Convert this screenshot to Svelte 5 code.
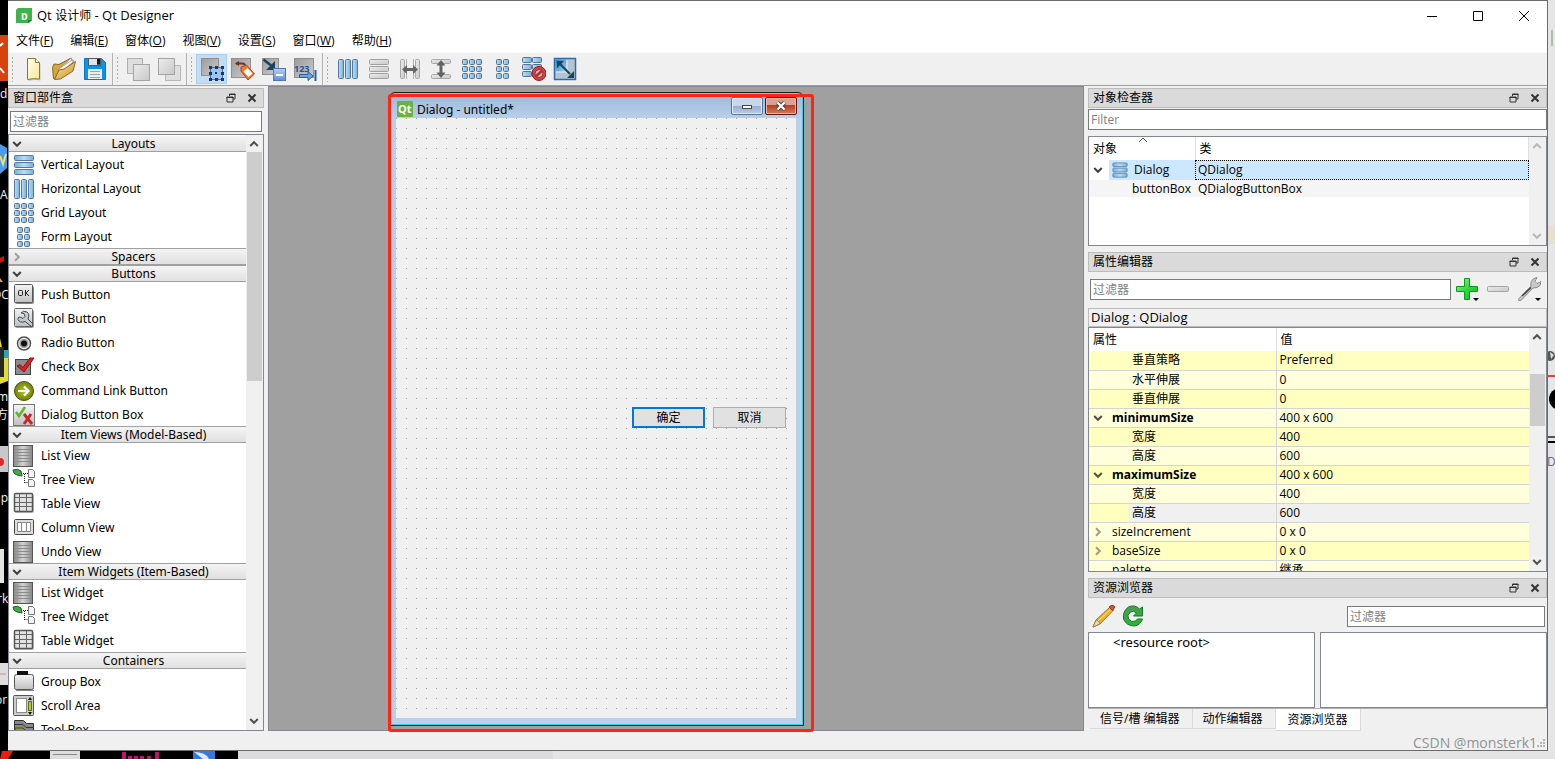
<script>
  const menus = [
    ['文件', 'F'], ['编辑', 'E'], ['窗体', 'O'], ['视图', 'V'],
    ['设置', 'S'], ['窗口', 'W'], ['帮助', 'H']
  ];

  const toolGroups = [
    [['new', '新建'], ['open', '打开'], ['save', '保存']],
    [['back', '置后'], ['front', '置前']],
    [['widgets', '编辑控件'], ['signals', '编辑信号/槽'], ['buddies', '编辑伙伴'], ['taborder', '编辑 Tab 顺序']],
    [['hbox', '水平布局'], ['vboxoff', '垂直布局'], ['hsplit', '水平分裂器'], ['vsplit', '垂直分裂器'],
     ['grid', '栅格布局'], ['form', '表单布局'], ['break', '打破布局'], ['adjust', '调整大小']]
  ];

  let activeTool = $state('widgets');

  let categories = $state([
    { name: 'Layouts', open: true, items: [['vbox', 'Vertical Layout'], ['hbox', 'Horizontal Layout'], ['grid', 'Grid Layout'], ['form', 'Form Layout']] },
    { name: 'Spacers', open: false, items: [] },
    { name: 'Buttons', open: true, items: [['push', 'Push Button'], ['tool', 'Tool Button'], ['radio', 'Radio Button'], ['check', 'Check Box'], ['command', 'Command Link Button'], ['bbox', 'Dialog Button Box']] },
    { name: 'Item Views (Model-Based)', open: true, items: [['list', 'List View'], ['tree', 'Tree View'], ['table', 'Table View'], ['column', 'Column View'], ['list', 'Undo View']] },
    { name: 'Item Widgets (Item-Based)', open: true, items: [['list', 'List Widget'], ['tree', 'Tree Widget'], ['table', 'Table Widget']] },
    { name: 'Containers', open: true, items: [['group', 'Group Box'], ['scroll', 'Scroll Area'], ['toolbox', 'Tool Box']] }
  ]);

  const properties = [
    { name: '垂直策略', value: 'Preferred', kind: 'child' },
    { name: '水平伸展', value: '0', kind: 'child' },
    { name: '垂直伸展', value: '0', kind: 'child' },
    { name: 'minimumSize', value: '400 x 600', kind: 'open' },
    { name: '宽度', value: '400', kind: 'child' },
    { name: '高度', value: '600', kind: 'child' },
    { name: 'maximumSize', value: '400 x 600', kind: 'open' },
    { name: '宽度', value: '400', kind: 'child' },
    { name: '高度', value: '600', kind: 'child', current: true },
    { name: 'sizeIncrement', value: '0 x 0', kind: 'closed' },
    { name: 'baseSize', value: '0 x 0', kind: 'closed' },
    { name: 'palette', value: '继承', kind: 'plain' }
  ];

  const tabs = ['信号/槽 编辑器', '动作编辑器', '资源浏览器'];
  let activeTab = $state(2);
</script>

{#snippet chevron(dir, tone)}
  <svg class="chev" viewBox="0 0 10 10" style:color={tone}>
    {#if dir === 'down'}
      <path d="M1.2 3 5 6.8 8.800 3" />
    {:else if dir === 'up'}
      <path d="M1.2 7 5 3.2 8.800 7" />
    {:else}
      <path d="M3 1.2 6.800 5 3 8.800" />
    {/if}
  </svg>
{/snippet}

{#snippet cells(xs, ys, w, h, fill, stroke)}
  {#each ys as y}
    {#each xs as x}
      <rect {x} {y} width={w} height={h} rx="1" fill="url(#{fill})" {stroke} />
    {/each}
  {/each}
{/snippet}

{#snippet sheet(x, y, s)}
  <rect {x} {y} width={s} height={s} fill="url(#g-grey)" stroke="#909090" />
{/snippet}

{#snippet icon(name)}
  <svg class="icon" viewBox="0 0 24 24" aria-hidden="true">
    {#if name === 'new'}
      <path d="M7 2.500h8l3.500 4v16q-6-1-12 .5z" fill="#999" opacity=".5" transform="translate(1 1)" />
      <path d="M6.500 1.500h8l4 4v16.500q-6-1-12 .5z" fill="url(#g-page)" stroke="#8a7a30" />
      <path d="M14.500 1.500v4h4" fill="#fff" stroke="#8a7a30" />
    {:else if name === 'open'}
      <path d="M.5 10.500 2 7l5 .5L19 1l1 3.500L7 21.500H1.500z" fill="#d7a63a" stroke="#8a6a1e" />
      <path d="M6 13 18.500 1.500 22 4 8 17z" fill="#f6f6f0" stroke="#999" />
      <path d="M8 11 20 3l2 3" fill="none" stroke="#aaa" />
      <path d="M2.500 22.500 7 13l5-1L23.500 4.500 21 14 8.500 22z" fill="url(#g-folder)" stroke="#8a6a1e" />
    {:else if name === 'save'}
      <path d="M1.500 1.500h17l4 4v17h-21z" fill="#0a94ee" stroke="#0878c8" />
      <rect x="5" y="1" width="13" height="8" fill="#54585c" />
      <rect x="6" y="2" width="8" height="6" fill="#dfe5e9" />
      <rect x="14" y="2" width="3" height="5" fill="#16181a" />
      <rect x="5" y="12" width="14" height="10" fill="#e9eff3" />
      <path d="M7 14.500h10M7 17.500h10M7 20.500h10" stroke="#9aa4aa" />
    {:else if name === 'back'}
      <rect x="1.500" y="1.500" width="15" height="15" fill="#dedede" stroke="#b0b0b0" />
      <rect x="7.500" y="7.500" width="16" height="16" fill="url(#g-off)" stroke="#a4a4a4" />
    {:else if name === 'front'}
      <rect x="8.500" y="8.500" width="15" height="15" fill="#dedede" stroke="#b8b8b8" />
      <rect x="1.500" y="1.500" width="16" height="16" fill="url(#g-off)" stroke="#a4a4a4" />
    {:else if name === 'widgets'}
      {@render sheet(1.5, 1.5, 17)}
      <rect x="10.500" y="10.500" width="12" height="12" fill="#9cc4f0" stroke="#4a6ea0" />
      <path d="M9 9h3v3H9zM15 9h3v3h-3zM21 9h3v3h-3zM9 15h3v3H9zM21 15h3v3h-3zM15 15h2v2h-2zM9 21h3v3H9zM15 21h3v3h-3zM21 21h3v3h-3z" fill="#20365c" />
    {:else if name === 'signals'}
      {@render sheet(0.5, 1.5, 19)}
      <path d="M5 6.500h6q4 0 3 4" fill="none" stroke="#7c3018" stroke-width="2" />
      <path d="M4 6.500 8 4v5z" fill="#7c3018" />
      <path d="M10 10 15.500 8l8 9-6.500 6-7-9z" fill="#f07830" stroke="#b04418" />
      <path d="m12.500 14.500 4-3.500 5 5.500-4 3.500z" fill="#fff" />
    {:else if name === 'buddies'}
      {@render sheet(0.5, 1.5, 16)}
      <path d="M1.500 2.500 11 10" stroke="#1c4460" stroke-width="2.500" />
      <path d="M13 4v9H4z" fill="#1c4460" />
      <rect x="11.500" y="11.500" width="12" height="12" fill="url(#g-blue2)" stroke="#5874b0" />
      <path d="M14 18h7" stroke="#fff" stroke-width="2" />
    {:else if name === 'taborder'}
      {@render sheet(1.5, 1.5, 19)}
      <text x="1" y="15" class="digits">123</text>
      <path d="M6.500 17.500H15v-3l5 4.500-5 4.500v-3H6.500z" fill="#6ea4e0" stroke="#2c5ca0" />
      <path d="M22.500 13v11" stroke="#2c5ca0" stroke-width="2" />
    {:else if name === 'hbox'}
      {@render cells([2.5, 9.5, 16.5], [2.5], 5, 19, 'g-blue', '#56789c')}
    {:else if name === 'vbox'}
      {@render cells([2.5], [2.5, 9.5, 16.5], 19, 5, 'g-blueh', '#56789c')}
    {:else if name === 'vboxoff'}
      {@render cells([2.5], [2.5, 9.5, 16.5], 19, 5, 'g-off', '#a0a0a0')}
    {:else if name === 'hsplit'}
      {@render cells([2.5, 17.5], [2.5], 4, 19, 'g-off', '#a8a8a8')}
      <path d="M8.500 2v20M15.500 2v20" stroke="#b0b0b0" />
      <path d="M4 12.500 9 8v3h6V8l5 4.500-5 4.500v-3H9v3z" fill="#646464" />
    {:else if name === 'vsplit'}
      {@render cells([2.5], [2.5, 17.5], 19, 4, 'g-off', '#a8a8a8')}
      <path d="M12 3 7.500 8.500h3v7h-3L12 21l4.500-5.500h-3v-7h3z" fill="#646464" />
    {:else if name === 'grid'}
      {@render cells([2.5, 9.5, 16.5], [2.5, 9.5, 16.5], 5, 5, 'g-blue', '#56708e')}
    {:else if name === 'form'}
      {@render cells([5.5, 12.5], [2.5, 9.5, 16.5], 5, 5, 'g-blue', '#56708e')}
    {:else if name === 'break'}
      {@render cells([0.5, 10.5], [0.5, 7.5, 14.5], 9, 5, 'g-blue', '#56708e')}
      <circle cx="17" cy="16.500" r="7" fill="#d84040" stroke="#8c2020" />
      <circle cx="17" cy="16.500" r="4" fill="#b8bcc4" stroke="#a02828" />
      <path d="m13.500 19.500 7-6" stroke="#c02c2c" stroke-width="2.500" />
    {:else if name === 'adjust'}
      <rect x="1.500" y="1.500" width="21" height="21" fill="#b4c4d2" stroke="#2f6ca6" stroke-width="1.500" />
      <path d="M2.500 2.500h11v12h-11z" fill="url(#g-sky)" />
      <path d="M14 3v12H3" fill="none" stroke="#e8f0f6" />
      <path d="m7 7 10 10" stroke="#12465e" stroke-width="2" />
      <path d="M4 4h7l-7 7zM21 21v-7l-7 7z" fill="#12465e" />
    {:else if name === 'push'}
      <rect x="3" y="3" width="19" height="18" rx="2" fill="#555" opacity=".7" />
      <rect x="2.500" y="1.500" width="18" height="18" rx="1" fill="url(#g-btn)" stroke="#555" />
      <rect x="6.500" y="7.500" width="4" height="5" rx="1" fill="none" stroke="#222" />
      <path d="M13.500 7v6M17 7l-3 3 3 3" fill="none" stroke="#222" />
    {:else if name === 'tool'}
      <rect x="3" y="3" width="19" height="18" rx="2" fill="#777" opacity=".7" />
      <rect x="2.500" y="1.500" width="18" height="18" rx="1" fill="url(#g-btn)" stroke="#666" />
      <path d="M6 12.500q2 4 7 2l7 5.500 1-3-5-5q2-5-1-7-4-2-6 1l3 .5 1 3-2 2-3-1.500q-2.500 0-2 2.500z" fill="#c4c8cc" stroke="#444a50" />
    {:else if name === 'radio'}
      <circle cx="12" cy="12.500" r="6.500" fill="#eee" stroke="#555" stroke-width="1.500" />
      <circle cx="12" cy="12.500" r="4.500" fill="#999" />
      <circle cx="12" cy="12.500" r="3" fill="#111" />
    {:else if name === 'check'}
      <rect x="3.500" y="4.500" width="15" height="15" fill="#8d8d8d" stroke="#444" />
      <path d="m5 11 3-1.500 3 3L18 3h4L12 17z" fill="#e02020" stroke="#8c1010" />
    {:else if name === 'command'}
      <circle cx="12" cy="12" r="9.500" fill="url(#g-olive)" stroke="#4a5808" />
      <path d="M6 12h10M12 7.500 16.500 12 12 16.500" fill="none" stroke="#fff" stroke-width="2.200" />
    {:else if name === 'bbox'}
      <rect x="1.500" y="1.500" width="21" height="21" fill="url(#g-btn)" stroke="#777" />
      <path d="m4 9 3 4 6-9" fill="none" stroke="#5cb82c" stroke-width="2.500" />
      <path d="m12 11 8 10M19 11l-7 10" stroke="#c82828" stroke-width="3" />
    {:else if name === 'list'}
      <rect x="1.500" y="1.500" width="19" height="21" fill="url(#g-list)" stroke="#555" />
      <path d="M3 5.500h16M3 8.500h16M3 11.500h16M3 14.500h16M3 17.500h16" stroke="#8a8a8a" />
      <path d="M5.500 3v18" stroke="#999" />
    {:else if name === 'tree'}
      <path d="M1 2q5-2 8 1l1 5-5-1Q1 6 1 2z" fill="#46a846" stroke="#1c6420" />
      <path d="M11 5.500h5M12.500 6v9M12.500 14.500h4" stroke="#222" stroke-dasharray="1 1" fill="none" />
      <path d="M16.500 1.500h4l2 2v6h-6zM16.500 11.500h4l2 2v5h-6z" fill="#f4f4f4" stroke="#777" />
    {:else if name === 'table'}
      <rect x="3" y="3" width="19" height="18" rx="1" fill="#999" opacity=".6" />
      <rect x="2.500" y="1.500" width="18" height="18" rx="1" fill="#e2e2e2" stroke="#555" stroke-width="1.500" />
      <path d="M3 5.500h17M3 10.500h17M3 14.500h17M7.500 2v17M14.500 2v17" stroke="#666" />
    {:else if name === 'column'}
      <rect x="2.500" y="3.500" width="19" height="15" rx="1" fill="#ddd" stroke="#444" />
      <path d="M5.500 6.500h4v9h-4zM9.500 6.500h5v9h-5zM14.500 6.500h4v9h-4z" fill="#fafafa" stroke="#888" />
    {:else if name === 'group'}
      <rect x="2.500" y="4.500" width="19" height="15" rx="2" fill="url(#g-btn)" stroke="#555" />
      <rect x="5" y="1" width="11" height="4" fill="#111" />
      <path d="M4 20.500h18" stroke="#888" />
    {:else if name === 'scroll'}
      <rect x="1.500" y="1.500" width="20" height="20" rx="1" fill="#ccc" stroke="#555" />
      <rect x="4.500" y="4.500" width="10" height="14" fill="#fff" stroke="#888" />
      <rect x="16.500" y="7.500" width="3" height="9" fill="#b4cc28" stroke="#607010" />
      <path d="m16 6 2-3 2 3zM16 18l2 3 2-3z" fill="#111" />
    {:else if name === 'toolbox'}
      <path d="M2.500 22V2.500h9l3 3h7V22z" fill="#888" stroke="#333" />
      <path d="M3 6.500h8l3 3h8" fill="none" stroke="#333" />
      <path d="M3 10h8l3 3h8v10H3z" fill="#8ca020" stroke="#445010" />
    {:else if name === 'plus'}
      <path d="M9.500 1.500h5v8h8v5h-8v8h-5v-8h-8v-5h8z" fill="url(#g-green)" stroke="#0a9a18" />
    {:else if name === 'minus'}
      <rect x="1.500" y="9.500" width="21" height="5" rx="1" fill="url(#g-off)" stroke="#a4a4a4" />
    {:else if name === 'wrench'}
      <path d="M1.500 22 14 9q-1-5 3-7.500l3-1-2 4 2 2 4-2q0 5-4 6l-4 .5L4 23.500q-3 1-2.500-1.500z" fill="#c8c8c8" stroke="#8c8c8c" />
      <path d="m5 19 9-8.500" stroke="#444" stroke-width="1.500" />
    {:else if name === 'pencil'}
      <path d="M1 23 4 16 18 3l3.500 3L8 20z" fill="#f0b030" stroke="#a87010" />
      <path d="M1 23 4 16q3 0 4 4z" fill="#ead8b0" stroke="#a08050" />
      <path d="m17 3 2-1.500q3-1 4 1.500l-2.500 3.500z" fill="#c05838" stroke="#904028" />
      <path d="m6 17 12-11" stroke="#ffdc80" />
    {:else if name === 'reload'}
      <path d="M21.500 3v9h-9l3-3q-3-3-6-1-4 3-2 7 3 4 7 2l2-2h5q-2 6-8 7-8 0-11-7-1-8 5-12 6-3 11 2z" fill="url(#g-reload)" stroke="#147828" />
    {/if}
  </svg>
{/snippet}

{#snippet dockTitle(title)}
  <header class="dock-title">
    <h2>{title}</h2>
    <button aria-label="浮动 {title}">
      <svg class="line" viewBox="0 0 10 10"><path d="M3.500 3V1h5.500v5H7M1 4h6v5H1z" /><path d="M3 1.500h6.500M.5 4.500h7" /></svg>
    </button>
    <button aria-label="关闭 {title}">
      <svg class="line" viewBox="0 0 10 10"><path class="bold" d="m1.500 1.500 7 7M8.500 1.500l-7 7" /></svg>
    </button>
  </header>
{/snippet}

<svg class="defs" aria-hidden="true">
  <defs>
    <linearGradient id="g-blue" x2="1"><stop offset="0" stop-color="#b8e0f8" /><stop offset="1" stop-color="#7cb0dc" /></linearGradient>
    <linearGradient id="g-blueh" x2="1"><stop offset="0" stop-color="#7ab0dc" /><stop offset=".5" stop-color="#b4dcf4" /><stop offset="1" stop-color="#7ab0dc" /></linearGradient>
    <linearGradient id="g-blue2" x2="0" y2="1"><stop offset="0" stop-color="#b4d0f4" /><stop offset="1" stop-color="#6090d8" /></linearGradient>
    <linearGradient id="g-sky" x2="1" y2="1"><stop offset="0" stop-color="#2c78bc" /><stop offset="1" stop-color="#a0d4f4" /></linearGradient>
    <linearGradient id="g-off" x2="1" y2="1"><stop offset="0" stop-color="#ececec" /><stop offset="1" stop-color="#c8c8c8" /></linearGradient>
    <linearGradient id="g-grey" x2="1" y2="1"><stop offset="0" stop-color="#9c9c9c" /><stop offset="1" stop-color="#cccccc" /></linearGradient>
    <linearGradient id="g-btn" x2="0" y2="1"><stop offset="0" stop-color="#f4f4f4" /><stop offset="1" stop-color="#c0c0c0" /></linearGradient>
    <linearGradient id="g-list" x2="1"><stop offset="0" stop-color="#8a8a8a" /><stop offset=".5" stop-color="#d4d4d4" /><stop offset="1" stop-color="#858585" /></linearGradient>
    <linearGradient id="g-page" x2="1" y2="1"><stop offset="0" stop-color="#fffef0" /><stop offset="1" stop-color="#f6e890" /></linearGradient>
    <linearGradient id="g-folder" x2="1" y2="1"><stop offset="0" stop-color="#f8e0a0" /><stop offset="1" stop-color="#d09828" /></linearGradient>
    <linearGradient id="g-green" x2="1" y2="1"><stop offset="0" stop-color="#b0f4a0" /><stop offset=".5" stop-color="#2cd83c" /><stop offset="1" stop-color="#08c418" /></linearGradient>
    <linearGradient id="g-reload" x2="0" y2="1"><stop offset="0" stop-color="#4c9c50" /><stop offset="1" stop-color="#28b438" /></linearGradient>
    <radialGradient id="g-olive"><stop offset="0" stop-color="#b8c820" /><stop offset="1" stop-color="#708010" /></radialGradient>
  </defs>
</svg>

<div class="desktop">
  <svg class="strip-left" aria-hidden="true">
    <rect y="35" width="8" height="46" fill="#d8420c" />
    <path d="M0 46 3 43M0 68l4 5" stroke="#fff" stroke-width="2" />
    <path d="M0 144 7 148v20l-7 6z" fill="#4b9ce8" />
    <path d="M0 156l3 8 3-10" stroke="#f4e070" stroke-width="2" fill="none" />
    <path d="M0 258 4 256v5l-4 2z" fill="#d01414" />
    <path d="M0 278 3 282H0z" fill="#e8a020" />
    <path d="M0 338 3 352 8 356v25l-8 3z" fill="#e0dc30" />
    <rect y="347" width="4" height="30" fill="#282828" />
    <rect x="4" y="350" width="4" height="8" fill="#22a8c0" />
    <rect y="446" width="8" height="26" fill="#c8c8c8" />
    <circle cy="462" r="4" fill="#e02828" />
    <rect y="549" width="4" height="34" fill="#e4e4e4" />
    <rect y="663" width="8" height="22" fill="#ddd" />
    <path d="M0 674h6" stroke="#d88" />
    <g class="scrap">
      <text x="0" y="98">d</text><text x="0" y="199">A</text><text x="-8" y="299">QC</text>
      <text x="-3" y="401">m</text><text x="-4" y="419">方</text><text x="-6" y="502">ap</text>
      <text x="-3" y="603">rk</text><text x="-5" y="704">or</text>
    </g>
  </svg>
  <svg class="strip-right" aria-hidden="true">
    <rect y="225" width="8" height="19" fill="#e6e0cf" />
    <path d="M0 376h8" stroke="#e0442c" stroke-width="2" />
    <circle cx="2" cy="356" r="5" fill="#555" />
    <path d="M2 352l4 3-3 4z" fill="#ddd" />
    <circle cx="12" cy="399" r="11" fill="#000" />
    <path d="M0 437h8" stroke="#555" stroke-width="2" />
    <path d="M0 442h8" stroke="#000" stroke-width="2" />
    <path d="M4 30v16" stroke="#6a9a6a" />
    <text x="-1" y="466">D</text>
  </svg>
  <svg class="strip-bottom" aria-hidden="true">
    <rect width="238" height="8" fill="#000" />
    <path d="M2 0h11L8 8H0z" fill="#e81c10" />
    <rect x="50" width="30" height="8" fill="#ddd" />
    <path d="M53 3.500h24" stroke="#888" />
    <path d="M122 1h4v7h-4zM155 1h4v7h-4zM128 5h4v3h-4zM134 5h4v3h-4zM140 5h4v3h-4zM147 5h4v3h-4z" fill="#b8186c" />
    <rect x="193" width="22" height="8" fill="#3878d8" />
    <path d="M194 1q12 0 15 7h-6z" fill="#dce8fa" />
    <rect x="238" width="315" height="8" fill="#dcdcdf" />
  </svg>

  <div class="window">
    <header class="titlebar">
      <svg class="app-icon" viewBox="0 0 16 16" aria-hidden="true">
        <path d="M0 2 2 0h14v12l-3 3H0z" fill="#3fb34b" />
        <path d="M12 15v-3h4z" fill="#1d7c2c" />
        <text x="5" y="12">D</text>
      </svg>
      <h1>Qt <span>设计师</span> - Qt Designer</h1>
      <div class="controls">
        <button aria-label="最小化"><svg class="line" viewBox="0 0 12 12"><path d="M1 6.500h10" /></svg></button>
        <button aria-label="最大化"><svg class="line" viewBox="0 0 12 12"><path d="M1.500 1.500h9v9h-9z" /></svg></button>
        <button aria-label="关闭"><svg class="line" viewBox="0 0 12 12"><path d="m1 1 10 10M11 1 1 11" /></svg></button>
      </div>
    </header>

    <nav class="menubar">
      {#each menus as [label, key]}
        <button>{label}(<u>{key}</u>)</button>
      {/each}
    </nav>

    <div class="toolbar" role="toolbar" aria-label="工具栏">
      {#each toolGroups as group}
        <div class="group">
          <span class="handle"></span>
          {#each group as [name, label]}
            <button class:active={activeTool === name} aria-label={label} onclick={() => (activeTool = name)}>
              {@render icon(name)}
            </button>
          {/each}
        </div>
      {/each}
    </div>

    <main>
      <aside class="dock">
        {@render dockTitle('窗口部件盒')}
        <input class="field inset" type="text" placeholder="过滤器" aria-label="过滤窗口部件" />
        <div class="box widget-box">
          <div class="widget-list">
            {#each categories as cat}
              <button class="category" aria-expanded={cat.open} onclick={() => (cat.open = !cat.open)}>
                {@render chevron(cat.open ? 'down' : 'right', cat.open ? '#404040' : '#a0a0a0')}
                <span>{cat.name}</span>
              </button>
              {#if cat.open}
                <ul>
                  {#each cat.items as [ic, label]}
                    <li>{@render icon(ic)}<span>{label}</span></li>
                  {/each}
                </ul>
              {/if}
            {/each}
          </div>
          <div class="scrollbar">
            {@render chevron('up', '#505050')}
            <div class="track"><div class="thumb long"></div></div>
            {@render chevron('down', '#505050')}
          </div>
        </div>
      </aside>

      <section class="mdi">
        <div class="form-window">
          <header>
            <svg class="qt" viewBox="0 0 16 16" aria-hidden="true">
              <rect width="16" height="16" rx="1" fill="#6cb33e" />
              <text x="1" y="12">Qt</text>
            </svg>
            <h2>Dialog - untitled*</h2>
            <button class="fw-min" aria-label="最小化窗体"><svg viewBox="0 0 14 10"><rect x="2.500" y="4.500" width="9" height="3" fill="#fff" stroke="#445" /></svg></button>
            <button class="fw-close" aria-label="关闭窗体"><svg viewBox="0 0 14 10"><path d="m3.500 1.500 7 7M10.500 1.500l-7 7" stroke="#444" stroke-width="4" /><path d="m3.500 1.500 7 7M10.500 1.500l-7 7" stroke="#fff" stroke-width="2.200" /></svg></button>
          </header>
          <div class="canvas">
            <svg class="dots" aria-hidden="true">
              <defs><pattern id="dots" width="10" height="10" patternUnits="userSpaceOnUse"><rect width="1" height="1" fill="#a0a0a0" /></pattern></defs>
              <rect width="100%" height="100%" fill="url(#dots)" />
            </svg>
            <div class="button-box">
              <button class="default">确定</button>
              <button>取消</button>
            </div>
          </div>
        </div>
        <div class="marker"></div>
      </section>

      <aside class="dock right">
        {@render dockTitle('对象检查器')}
        <input class="field" type="text" placeholder="Filter" aria-label="Filter" />
        <div class="box inspector">
          <table>
            <thead>
              <tr><th class="sorted">对象 <svg class="line" viewBox="0 0 10 6"><path d="m1 5 4-4 4 4" /></svg></th><th>类</th></tr>
            </thead>
            <tbody>
              <tr class="selected">
                <td><div class="object">{@render chevron('down', '#404040')}<span class="name">{@render icon('vbox')}Dialog</span></div></td>
                <td class="focus">QDialog</td>
              </tr>
              <tr class="alt"><td class="nested">buttonBox</td><td>QDialogButtonBox</td></tr>
            </tbody>
          </table>
          <div class="scrollbar">
            {@render chevron('up', '#b8b8b8')}
            <div class="track"></div>
            {@render chevron('down', '#b8b8b8')}
          </div>
        </div>

        {@render dockTitle('属性编辑器')}
        <div class="prop-tools">
          <input class="field" type="text" placeholder="过滤器" aria-label="过滤属性" />
          <button class="drop" aria-label="添加动态属性">{@render icon('plus')}</button>
          <button aria-label="移除动态属性">{@render icon('minus')}</button>
          <button class="drop" aria-label="配置属性编辑器">{@render icon('wrench')}</button>
        </div>
        <p class="object-label">Dialog : QDialog</p>
        <div class="box props">
          <div class="clip">
            <table>
              <thead><tr><th>属性</th><th>值</th></tr></thead>
              <tbody>
                {#each properties as p}
                  <tr class={p.kind} class:current={p.current}>
                    <td>
                      <div>
                        <span class="expander">
                          {#if p.kind === 'open'}{@render chevron('down', '#505040')}{/if}
                          {#if p.kind === 'closed'}{@render chevron('right', '#a0a080')}{/if}
                        </span>
                        <span class="pname">{p.name}</span>
                      </div>
                    </td>
                    <td>{p.value}</td>
                  </tr>
                {/each}
              </tbody>
            </table>
          </div>
          <div class="scrollbar">
            {@render chevron('up', '#505050')}
            <div class="track lower"><div class="thumb short"></div></div>
            {@render chevron('down', '#505050')}
          </div>
        </div>

        {@render dockTitle('资源浏览器')}
        <div class="res-tools">
          <button aria-label="编辑资源">{@render icon('pencil')}</button>
          <button aria-label="重新加载">{@render icon('reload')}</button>
          <input class="field" type="text" placeholder="过滤器" aria-label="过滤资源" />
        </div>
        <div class="res-lists">
          <div class="box">&lt;resource root&gt;</div>
          <div class="box"></div>
        </div>
        <div class="tabs" role="tablist">
          {#each tabs as tab, i}
            <button role="tab" aria-selected={activeTab === i} onclick={() => (activeTab = i)}>{tab}</button>
          {/each}
        </div>
      </aside>
    </main>

    <footer>
      <span>CSDN @monsterk1</span>
      <svg viewBox="0 0 8 8" aria-hidden="true"><path d="M6 0h2v2H6zM3 3h2v2H3zM6 3h2v2H6zM0 6h2v2H0zM3 6h2v2H3zM6 6h2v2H6z" fill="#b4b4b4" /></svg>
    </footer>
  </div>
</div>

<style>
  :global(body) { margin: 0; }
  * { box-sizing: border-box; }
  .desktop {
    --ui: "Open Sans", "Noto Sans CJK SC", sans-serif;
    --form: "Noto Sans", "Noto Sans CJK SC", sans-serif;
    position: relative;
    height: 100vh;
    min-height: 640px;
    overflow: hidden;
    padding: 0 7px 8px 8px;
    background: #e4e4e4;
    color: #000;
    font: 12px/16px var(--ui);
  }
  h1, h2, p, ul { margin: 0; padding: 0; font: inherit; }
  ul { list-style: none; }
  button { margin: 0; padding: 0; border: 0; background: none; color: inherit; font: inherit; }
  svg { display: block; flex: none; }
  .line, .chev { fill: none; }
  .defs { position: absolute; width: 0; height: 0; }
  .strip-left, .strip-right, .strip-bottom { position: absolute; }
  .strip-left { left: 0; top: 0; width: 8px; height: 100%; background: #000; }
  .strip-right { right: 0; top: 0; width: 7px; height: 100%; background: #e6e6e8; }
  .strip-bottom { left: 0; bottom: 0; width: 100%; height: 8px; background: #e4e4e5; }
  .scrap { fill: #eee; font-size: 12px; }
  .strip-right text { fill: #5c708c; font-size: 12px; }

  .window {
    position: relative;
    display: flex;
    flex-direction: column;
    height: 100%;
    border: 1px solid #6c6c6c;
    border-left: 0;
    background: #f0f0f0;
  }
  .titlebar { display: flex; align-items: center; height: 29px; padding-left: 8px; background: #fff; }
  .titlebar h1 { font-size: 13px; }
  .titlebar h1 span { font-size: 12px; }
  .app-icon { width: 16px; height: 16px; margin-right: 5px; }
  .app-icon text { fill: #fff; font: bold 11px "Liberation Mono", monospace; }
  .controls { display: flex; margin-left: auto; }
  .controls button { display: grid; place-items: center; width: 46px; height: 28px; }
  .controls svg { width: 12px; height: 12px; stroke: #000; }
  .menubar { display: flex; align-items: flex-start; gap: 17px; height: 22px; padding: 3px 8px 0; background: #fff; }
  .toolbar { display: flex; height: 34px; border-bottom: 1px solid #a0a0a0; border-top: 1px solid #fafafa; }
  .group { display: flex; align-items: center; padding-right: 2px; border-right: 1px solid #b4b4b4; }
  .group:last-child { border: 0; }
  .handle { width: 3px; height: 26px; margin: 0 3px; background: radial-gradient(circle, #a8a8a8 1px, transparent 1px) 0 0 / 3px 4px; }
  .group button { display: grid; place-items: center; width: 31px; height: 30px; }
  .group button.active { background: #c2dcf4; box-shadow: inset 0 0 0 1px #a8cff0; }
  .icon { width: 24px; height: 24px; }
  .digits { fill: #2458a4; font: bold 9px "Open Sans", sans-serif; }

  main { display: grid; grid-template-columns: 256px minmax(0, 1fr) 459px; gap: 4px; flex: 1; min-height: 0; }
  .dock { display: flex; flex-direction: column; min-height: 0; padding-top: 2px; }
  .dock-title { display: flex; align-items: center; flex: none; gap: 11px; height: 20px; padding: 0 6px 0 4px; border: 1px solid #bcbcbc; background: #dadada; }
  .dock-title h2 { flex: 1; }
  .dock-title svg { width: 10px; height: 10px; stroke: #333; }
  .dock-title .bold { stroke-width: 2; }
  .field { flex: none; height: 21px; min-width: 0; margin: 0; padding: 0 2px; border: 1px solid #7a7a7a; border-radius: 0; background: #fff; font: inherit; outline: none; }
  .field::placeholder { color: #808080; opacity: 1; }
  .field.inset { margin: 3px 2px 2px; }
  .box { display: flex; min-height: 0; border: 1px solid #828790; background: #fff; }
  .chev { width: 10px; height: 10px; }
  .chev path { stroke: currentColor; stroke-width: 2; }

  .widget-box { flex: 1; font-family: var(--form); }
  .widget-list { flex: 1; min-width: 0; overflow: hidden; }
  .category { display: flex; align-items: center; width: 100%; height: 17px; padding: 0 1px 0 3px; border-bottom: 1px solid #a0a0a0; border-top: 1px solid #a0a0a0; background: linear-gradient(#f4f4f4, #e0e0e0); line-height: 15px; }
  .category:first-child { border-top-color: #fff; }
  .category span { flex: 1; text-align: center; }
  li { display: flex; align-items: center; gap: 5px; height: 24px; padding: 2px 0 0 3px; }
  .scrollbar { display: flex; flex-direction: column; align-items: center; flex: none; width: 17px; padding: 4px 1px 4px 0; background: #f0f0f0; }
  .track { flex: 1; width: 100%; padding: 3px 0 3px 1px; }
  .thumb { background: #cdcdcd; }
  .thumb.long { height: 229px; }
  .thumb.short { height: 52px; }
  .track.lower { padding-top: 32px; }

  .mdi { position: relative; border: 1px solid #828790; background: #a0a0a0; }
  .form-window { position: absolute; left: 120px; top: 5px; width: 415px; border: 1px solid #1c1c1c; border-radius: 6px 6px 0 0; padding: 0 6px 7px; background: linear-gradient(#9cb8d8, #b8d0ea 26px); box-shadow: inset -1px -1px #36d0e8; }
  .form-window header { display: flex; height: 25px; padding-left: 1px; font-family: var(--form); }
  .form-window h2 { flex: 1; padding: 9px 0 0 4px; }
  .qt { width: 16px; height: 16px; margin-top: 8px; }
  .qt text { fill: #fff; font: bold 11px "Open Sans", sans-serif; }
  .fw-min, .fw-close { display: grid; place-items: center; width: 32px; height: 18px; margin: 4px 0 0 2px; border: 1px solid #5c7494; border-radius: 2px; background: linear-gradient(#c8d8ec 50%, #98b0cc 50%, #b8cce4); box-shadow: inset 0 0 0 1px #dfeaf6; }
  .fw-close { border-color: #5c1818; background: linear-gradient(#e0a090 45%, #b83c20 45%, #d87858); box-shadow: inset 0 0 0 1px #e8b8a8; }
  .fw-min svg, .fw-close svg { width: 14px; height: 10px; }
  .canvas { position: relative; width: 400px; height: 600px; background: #f0f0f0; }
  .dots { width: 100%; height: 100%; }
  .button-box { position: absolute; left: 236px; top: 289px; display: flex; gap: 8px; }
  .button-box button { width: 73px; height: 21px; border: 1px solid #adadad; background: #e1e1e1; line-height: 16px; }
  .button-box .default { border: 2px solid #0078d7; }
  .marker { position: absolute; left: 119px; top: 7px; width: 426px; height: 638px; border: 3px solid #ff2414; border-radius: 3px; pointer-events: none; }

  table { width: 100%; border-collapse: collapse; table-layout: fixed; }
  th, td { padding: 0; text-align: left; font-weight: normal; white-space: nowrap; overflow: hidden; }
  .right > .field { margin-top: 1px; }
  .inspector { flex: none; height: 110px; margin: 6px 0; }
  .inspector table { flex: 1; align-self: flex-start; }
  .inspector th { height: 23px; padding-left: 4px; border-right: 1px solid #e0e0e0; }
  .inspector th:first-child { width: 106px; }
  .sorted { position: relative; }
  .sorted svg { position: absolute; left: 49px; top: 0; width: 10px; height: 6px; stroke: #555; }
  .inspector td { height: 17px; padding-left: 3px; }
  .inspector .selected td { height: 20px; }
  .inspector .selected td:first-child { padding-left: 4px; }
  .object { display: flex; align-items: center; gap: 6px; }
  .object .name { display: flex; align-items: center; gap: 5px; flex: 1; height: 20px; padding-left: 2px; background: #cce8ff; }
  .object .icon { width: 18px; height: 18px; }
  .focus { background: #cce8ff; outline: 1px dotted #000; outline-offset: -1px; }
  .alt { background: #f5f5f5; }
  .inspector .nested { padding-left: 43px; }

  .prop-tools { display: flex; align-items: center; height: 36px; flex: none; padding: 0 3px 2px 2px; }
  .prop-tools .field { flex: 1; }
  .prop-tools button { position: relative; width: 31px; height: 26px; display: grid; place-items: center; }
  .drop::after { content: ""; position: absolute; right: 3px; bottom: 1px; border: 3px solid transparent; border-top-color: #000; border-bottom: 0; }
  .object-label { flex: none; height: 19px; padding-left: 2px; border: 1px solid #bcbcbc; font-size: 13px; line-height: 17px; }
  .props { flex: 1; margin: 0 0 6px; }
  .clip { flex: 1; min-width: 0; overflow: hidden; }
  .props th { height: 23px; padding-left: 4px; }
  .props th:first-child { width: 187px; border-right: 1px solid #e0e0e0; }
  .props td { height: 19px; padding: 0 0 0 3px; border-bottom: 1px solid #d4d4d4; }
  .props td:first-child { padding: 0; border-right: 1px solid #d4d4d4; }
  .props tbody tr:nth-child(odd) { background: #ffffbf; }
  .props tbody tr:nth-child(even) { background: #ffffdc; }
  .props td div { display: flex; align-items: center; }
  .expander { width: 20px; padding-left: 4px; }
  .pname { flex: 1; padding-left: 3px; line-height: 18px; }
  .child .expander { width: 40px; }
  .open .pname { font-weight: bold; }
  .props tbody tr.current:nth-child(n) { background: #f0f0f0; }
  .current .expander { align-self: stretch; background: #ffffbf; }

  .res-tools { display: flex; align-items: center; flex: none; gap: 5px; height: 34px; padding: 2px 2px 0 4px; }
  .res-tools .field { width: 198px; margin-left: auto; }
  .res-lists { display: grid; grid-template-columns: 1fr 1fr; gap: 5px; flex: none; }
  .res-lists .box { height: 76px; padding: 1px 0 0 24px; font-family: var(--form); font-size: 13px; }
  .tabs { display: flex; align-items: flex-start; flex: none; height: 23px; padding-left: 2px; border-top: 1px solid #b0b0b0; }
  .tabs button { height: 20px; padding: 0 12px 0 10px; border: 1px solid #d9d9d9; border-top: 0; border-left-width: 0; }
  .tabs button[aria-selected="true"] { height: 22px; padding: 0 12px; background: #fff; }

  footer { display: flex; align-items: center; justify-content: flex-end; flex: none; height: 19px; padding: 5px 2px 0 0; color: #929292; font-size: 14px; }
  footer svg { width: 8px; height: 8px; }
</style>
